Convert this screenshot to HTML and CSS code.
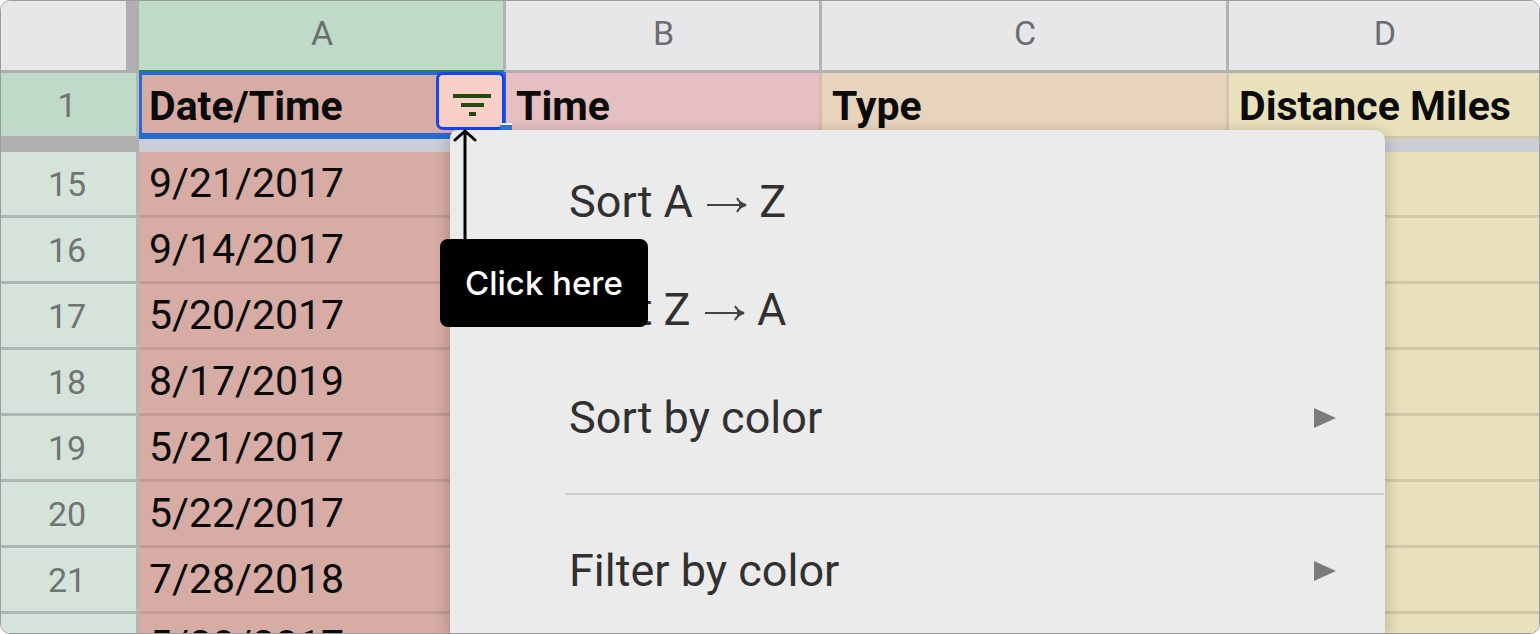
FILE: index.html
```html
<!DOCTYPE html>
<html lang="en">
<head>
<meta charset="utf-8">
<meta name="viewport" content="width=device-width, initial-scale=1">
<title>Sort and filter menu</title>
<link rel="stylesheet" href="styles.css">
</head>
<body>
<main class="sheet">
  <table class="grid">
    <colgroup>
      <col class="col-index"><col class="col-a"><col class="col-b"><col class="col-c"><col>
    </colgroup>
    <thead>
      <tr class="letters">
        <td class="corner"></td>
        <th class="selected" scope="col">A</th>
        <th scope="col">B</th>
        <th scope="col">C</th>
        <th scope="col">D</th>
      </tr>
    </thead>
    <tbody>
      <tr class="titles">
        <th class="index active" scope="row">1</th>
        <td class="rose current">Date/Time
          <button class="filter" type="button" aria-label="Filter Date/Time">
            <svg width="40" height="24" viewBox="0 0 40 24" aria-hidden="true"><path d="M1 3h38M9 12h23M17 21h7" fill="none" stroke="#244a12" stroke-width="4"/></svg>
          </button>
        </td>
        <td class="pink">Time</td>
        <td class="peach">Type</td>
        <td class="sand">Distance Miles</td>
      </tr>
      <tr class="freeze"><td class="freeze-index"></td><td colspan="4"></td></tr>
      <tr><th class="index" scope="row">15</th><td class="rose">9/21/2017</td><td class="pink"></td><td class="peach"></td><td class="sand"></td></tr>
      <tr><th class="index" scope="row">16</th><td class="rose">9/14/2017</td><td class="pink"></td><td class="peach"></td><td class="sand"></td></tr>
      <tr><th class="index" scope="row">17</th><td class="rose">5/20/2017</td><td class="pink"></td><td class="peach"></td><td class="sand"></td></tr>
      <tr><th class="index" scope="row">18</th><td class="rose">8/17/2019</td><td class="pink"></td><td class="peach"></td><td class="sand"></td></tr>
      <tr><th class="index" scope="row">19</th><td class="rose">5/21/2017</td><td class="pink"></td><td class="peach"></td><td class="sand"></td></tr>
      <tr><th class="index" scope="row">20</th><td class="rose">5/22/2017</td><td class="pink"></td><td class="peach"></td><td class="sand"></td></tr>
      <tr><th class="index" scope="row">21</th><td class="rose">7/28/2018</td><td class="pink"></td><td class="peach"></td><td class="sand"></td></tr>
      <tr><th class="index" scope="row">22</th><td class="rose">5/20/2017</td><td class="pink"></td><td class="peach"></td><td class="sand"></td></tr>
    </tbody>
  </table>

  <div class="menu" role="menu">
    <button class="item" type="button" role="menuitem"><span>Sort A <svg class="arrow" width="44" height="16" viewBox="0 0 44 16" role="img" aria-label="to"><path d="M3 8h37M33 1c2 4 5 6 9 7c-4 1-7 3-9 7" fill="none" stroke="#444" stroke-width="2"/><path d="M35 4l7 4-7 4z" fill="#444"/></svg> Z</span></button>
    <button class="item" type="button" role="menuitem"><span>Sort Z <svg class="arrow" width="44" height="16" viewBox="0 0 44 16" role="img" aria-label="to"><path d="M3 8h37M33 1c2 4 5 6 9 7c-4 1-7 3-9 7" fill="none" stroke="#444" stroke-width="2"/><path d="M35 4l7 4-7 4z" fill="#444"/></svg> A</span></button>
    <button class="item" type="button" role="menuitem">Sort by color
      <svg width="22" height="20" viewBox="0 0 22 20" aria-hidden="true"><path d="M0 0l22 10L0 20z" fill="#7b7b7b"/></svg>
    </button>
    <hr class="rule">
    <button class="item" type="button" role="menuitem">Filter by color
      <svg width="22" height="20" viewBox="0 0 22 20" aria-hidden="true"><path d="M0 0l22 10L0 20z" fill="#7b7b7b"/></svg>
    </button>
  </div>

  <div class="callout">
    <svg class="pointer" width="26" height="110" viewBox="0 0 26 110" aria-hidden="true"><path d="M13 110V2M3 11L13 2l10 9" fill="none" stroke="#000" stroke-width="3" stroke-linecap="round" stroke-linejoin="round"/></svg>
    <div class="hint">Click here</div>
  </div>
</main>
</body>
</html>
```
FILE: styles.css
```css
* { box-sizing: border-box; }

body {
  margin: 0;
  background: #fff;
  font-family: Roboto, "Liberation Sans", sans-serif;
}

.sheet {
  position: relative;
  height: 100vh;
  overflow: hidden;
  border: 1px solid #9c9c9c;
  border-radius: 10px;
}

.grid {
  width: 100%;
  table-layout: fixed;
  border-collapse: separate;
  border-spacing: 0;
}

.col-index { width: 138px; }
.col-a { width: 367px; }
.col-b { width: 316px; }
.col-c { width: 407px; }

.grid tr { height: 66px; }
.grid td, .grid th { padding: 0; }

.grid td {
  padding: 0 0 2px 10px;
  border-bottom: 3px solid;
  color: #0b0b0b;
  font-size: 41px;
  line-height: 48px;
  white-space: nowrap;
}

.grid .letters { height: 72px; }

.grid .letters th {
  padding: 0 0 5px 2px;
  border-right: 3px solid #b3b3b4;
  border-bottom: 3px solid #b0b0b1;
  background: #e7e7e9;
  color: #6c6d70;
  font-size: 34px;
  font-weight: 400;
}

.grid .letters th:last-child { border-right: 0; }

.grid .letters .selected {
  border-bottom-color: #2b8056;
  background: #bfdac9;
}

.grid .corner {
  border-right: 13px solid #afafaf;
  border-bottom: 3px solid #afafaf;
  background: #e7e7e9;
}

.grid .index {
  padding: 0 3px 0 0;
  border-right: 3px solid #b4b7b5;
  border-bottom: 3px solid #afb6b1;
  background: #d5e3da;
  color: #707473;
  font-size: 34px;
  font-weight: 400;
}

.grid .active {
  border-bottom-color: #afafaf;
  background: #bfdac9;
}

.grid .rose { background: #d7aca4; border-bottom-color: #c29b94; }
.grid .pink { background: #e5bfc1; border-bottom-color: #cfacae; }
.grid .peach { background: #e8d4bc; border-bottom-color: #d1bfa9; }
.grid .sand { background: #e9e0bc; border-bottom-color: #d2c9a8; }

.grid .titles td { padding: 3px 0 0 10px; font-weight: 700; }
.titles .pink, .titles .peach { border-right: 3px solid #d5c6ad; }
.grid .titles .pink { border-right-color: #d5bcab; }

.grid .current { position: relative; }

.current::before {
  content: "";
  position: absolute;
  inset: -1px 0 -3px 0;
  border: solid #266ad2;
  border-width: 3px 3px 6px;
}

.current::after {
  content: "";
  position: absolute;
  right: -6px;
  bottom: 6px;
  width: 12px;
  height: 5px;
  border-top: 2px solid #f3f6fb;
  background: #3079da;
}

.filter {
  position: absolute;
  top: -1px;
  right: 1px;
  display: grid;
  place-items: center;
  width: 69px;
  height: 58px;
  padding: 8px 0 0 3px;
  border: 3px solid #1645f0;
  border-radius: 7px;
  background: #f8d0c7;
}

.grid .freeze { height: 13px; }
.grid .freeze td { height: 13px; padding: 0; border: 0; background: #cbced6; line-height: 0; }
.grid .freeze .freeze-index { background: #afafaf; }

.menu {
  position: absolute;
  top: 129px;
  bottom: 0;
  left: 449px;
  width: 935px;
  padding-top: 18px;
  border-radius: 8px 10px 0 0;
  background: #ebebeb;
  box-shadow: 0 4px 16px rgba(0, 0, 0, 0.25);
}

.item {
  display: flex;
  align-items: center;
  justify-content: space-between;
  width: 100%;
  height: 108px;
  padding: 0 49px 0 119px;
  border: 0;
  background: none;
  color: #303030;
  font: 400 45px/52px Roboto, "Liberation Sans", sans-serif;
  text-align: left;
}

.arrow { vertical-align: 4px; }

.rule {
  height: 2px;
  margin: 21px 1px 22px 115px;
  border: 0;
  background: #cfcfcf;
}

.callout {
  position: absolute;
  top: 128px;
  left: 439px;
}

.pointer {
  display: block;
  margin-left: 12px;
}

.hint {
  padding: 22px 25px;
  border-radius: 8px;
  background: #000;
  color: #fff;
  font: 500 33px/44px Inter, sans-serif;
  white-space: nowrap;
}
```
